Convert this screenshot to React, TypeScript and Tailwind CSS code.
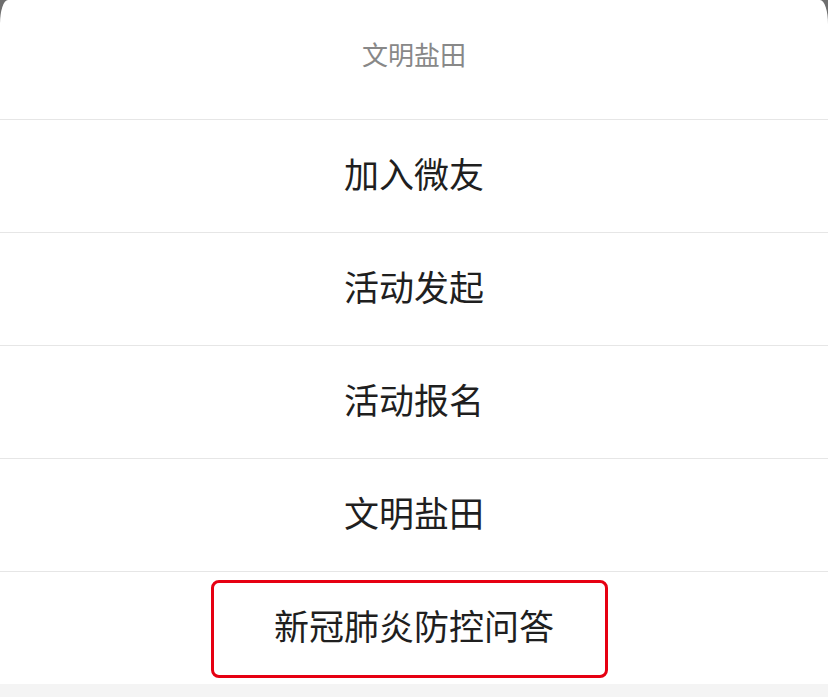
export default function App() {
  const items = ["加入微友", "活动发起", "活动报名", "文明盐田"]
  return (
    <div
      className="relative h-[697px] w-[828px] overflow-hidden bg-[#6e6e6e]"
      style={{ fontFamily: '"Noto Sans CJK SC", "Noto Sans", sans-serif' }}
    >
      <div className="flex h-full flex-col rounded-tl-[8px_24px] rounded-tr-[8px_24px] bg-white">
        <div className="flex h-[119px] items-center justify-center pb-[12px] text-[26px] text-[#888888]">
          文明盐田
        </div>
        {items.map((t) => (
          <div
            key={t}
            className="flex h-[113px] items-center justify-center border-t border-[#e6e6e6] pb-[6px] text-[35px] text-[#1f1f1f]"
          >
            {t}
          </div>
        ))}
        <div className="relative flex h-[113px] items-center justify-center border-t border-[#e6e6e6] pb-[6px] text-[35px] text-[#1f1f1f]">
          新冠肺炎防控问答
          <div className="absolute left-[211px] top-[8px] h-[98px] w-[397px] rounded-[8px] border-[3px] border-[#e60012]" />
        </div>
        <div className="flex-1 bg-[#f4f4f4]" />
      </div>
    </div>
  )
}
